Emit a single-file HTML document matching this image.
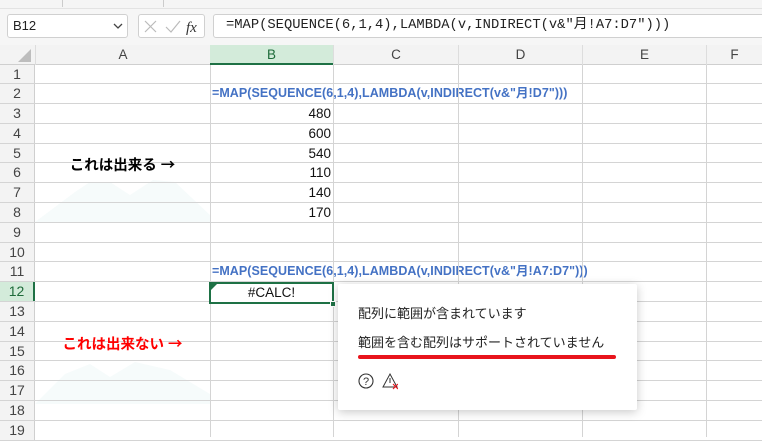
<!DOCTYPE html>
<html><head><meta charset="utf-8"><style>
*{margin:0;padding:0;box-sizing:border-box}
body{width:762px;height:437px;overflow:hidden;background:#fff;font-family:"Liberation Sans","Noto Sans CJK JP",sans-serif;position:relative}
.abs{position:absolute}
.grid{position:absolute;left:0;top:64.5px;width:762px}
.row{height:19.8px;position:relative;border-bottom:1px solid #d4d4d4}
.rh{position:absolute;left:0;top:0;width:35px;height:100%;background:#f3f3f3;color:#444;font-size:14px;text-align:center;line-height:19px;border-right:1px solid #cfcfcf}
.v{position:absolute;top:0;bottom:0;width:1px;background:#d4d4d4}
.num{position:absolute;right:431px;font-size:13.5px;color:#111;line-height:19px;top:0}
.f{position:absolute;left:212px;font-size:12.5px;font-weight:bold;color:#4472c4;line-height:19px;white-space:nowrap;letter-spacing:0.05px}
.ar{font-family:"Noto Sans CJK JP",sans-serif}
</style></head><body>
<div class="abs" style="left:0;top:0;width:762px;height:9px;background:#f5f5f5;border-bottom:1px solid #e3e3e3"></div>
<div class="abs" style="left:62px;top:0;width:1px;height:7px;background:#ccc"></div>
<div class="abs" style="left:163px;top:0;width:1px;height:7px;background:#ccc"></div>
<div class="abs" style="left:0;top:9px;width:762px;height:36px;background:#f6f6f6"></div>
<div class="abs" style="left:7px;top:14px;width:121px;height:24px;background:#fff;border:1px solid #d0d0d0;border-radius:3px;font-size:13px;line-height:22px;padding-left:5px;color:#222">B12</div>
<svg class="abs" style="left:113px;top:22px" width="10" height="8"><path d="M1 2 L5 6 L9 2" stroke="#444" stroke-width="1.3" fill="none"/></svg>
<div class="abs" style="left:138px;top:14px;width:67px;height:24px;background:#fff;border:1px solid #d0d0d0;border-radius:3px"></div>
<svg class="abs" style="left:142px;top:18px" width="60" height="18"><path d="M3 3 L14 14 M14 3 L3 14" stroke="#bbb" stroke-width="1.2"/><path d="M24 9 L29 14 L38 3" stroke="#bbb" stroke-width="1.2" fill="none"/><text x="44" y="14" font-family="Liberation Serif" font-style="italic" font-size="15" fill="#333">fx</text></svg>
<div class="abs" style="left:213px;top:14px;width:560px;height:24px;background:#fff;border:1px solid #d0d0d0;border-radius:3px;font-family:'Liberation Mono','Noto Sans CJK JP',monospace;font-size:13.8px;line-height:21px;padding-left:12px;color:#222;white-space:nowrap">=MAP(SEQUENCE(6,1,4),LAMBDA(v,INDIRECT(v&amp;"月!A7:D7")))</div>
<div class="abs" style="left:0;top:45px;width:762px;height:20px;background:#f3f3f3;border-bottom:1px solid #cfcfcf;font-size:13.5px;color:#444;line-height:20px">
<svg class="abs" style="left:18px;top:4px" width="14" height="14"><path d="M13 0 L13 13 L0 13Z" fill="#bdbdbd"/></svg>
<div class="abs" style="left:35px;width:175px;text-align:center;border-left:1px solid #ddd">A</div>
<div class="abs" style="left:210px;width:123px;height:20px;text-align:center;background:#d3ebda;color:#1e6b3a;border-bottom:2px solid #1e7145">B</div>
<div class="abs" style="left:333px;width:125px;text-align:center;border-left:1px solid #ddd">C</div>
<div class="abs" style="left:458px;width:124px;text-align:center;border-left:1px solid #ddd">D</div>
<div class="abs" style="left:582px;width:124px;text-align:center;border-left:1px solid #ddd">E</div>
<div class="abs" style="left:706px;width:56px;text-align:center;border-left:1px solid #ddd">F</div>
</div>
<svg class="abs" style="left:35px;top:170px" width="175" height="52"><path d="M0 52 L40 22 L55 12 L75 12 L95 25 L118 10 L140 12 L175 45 L175 52Z" fill="#f6fbfb"/></svg>
<svg class="abs" style="left:35px;top:352px" width="175" height="52"><path d="M0 52 L30 22 L55 12 L75 25 L100 10 L135 18 L175 42 L175 52Z" fill="#f6fbfb"/></svg>
<div class="grid">
<div class="row"><div class="rh">1</div></div>
<div class="row"><div class="rh">2</div><div class="f">=MAP(SEQUENCE(6,1,4),LAMBDA(v,INDIRECT(v&amp;"月!D7")))</div></div>
<div class="row"><div class="rh">3</div><div class="num">480</div></div>
<div class="row"><div class="rh">4</div><div class="num">600</div></div>
<div class="row"><div class="rh">5</div><div class="num">540</div></div>
<div class="row"><div class="rh">6</div><div class="num">110</div></div>
<div class="row"><div class="rh">7</div><div class="num">140</div></div>
<div class="row"><div class="rh">8</div><div class="num">170</div></div>
<div class="row"><div class="rh">9</div></div>
<div class="row"><div class="rh">10</div></div>
<div class="row"><div class="rh">11</div><div class="f">=MAP(SEQUENCE(6,1,4),LAMBDA(v,INDIRECT(v&amp;"月!A7:D7")))</div></div>
<div class="row"><div class="rh" style="background:#d3ebda;color:#1e6b3a;border-right:2px solid #1e7145">12</div></div>
<div class="row"><div class="rh">13</div></div>
<div class="row"><div class="rh">14</div></div>
<div class="row"><div class="rh">15</div></div>
<div class="row"><div class="rh">16</div></div>
<div class="row"><div class="rh">17</div></div>
<div class="row"><div class="rh">18</div></div>
<div class="row"><div class="rh">19</div></div>
</div>
<div class="v" style="left:210px;top:65px"></div>
<div class="v" style="left:333px;top:65px"></div>
<div class="v" style="left:458px;top:65px"></div>
<div class="v" style="left:582px;top:65px"></div>
<div class="v" style="left:706px;top:65px"></div>
<div class="abs" style="left:35px;top:154px;width:175px;text-align:center;font-size:14.5px;font-weight:bold;color:#000">これは出来る <span class="ar">→</span></div>
<div class="abs" style="left:35px;top:333px;width:175px;text-align:center;font-size:14.5px;font-weight:bold;color:#f00">これは出来ない <span class="ar">→</span></div>
<div class="abs" style="left:209px;top:282px;width:125px;height:22px;border:2px solid #1e7145;background:#fff;text-align:center;font-size:13.5px;line-height:18px;color:#111">#CALC!</div>
<svg class="abs" style="left:211px;top:284px" width="6" height="6"><path d="M0 0 L6 0 L0 6Z" fill="#1e7145"/></svg>
<div class="abs" style="left:330px;top:301px;width:6px;height:6px;background:#1e7145;border:1px solid #fff"></div>
<div class="abs" style="left:338px;top:284px;width:299px;height:126px;background:#fff;box-shadow:0 2px 10px rgba(0,0,0,.22);border-radius:2px">
<div class="abs" style="left:20px;top:19px;font-size:13px;color:#222">配列に範囲が含まれています</div>
<div class="abs" style="left:20px;top:48px;font-size:13px;color:#222">範囲を含む配列はサポートされていません</div>
<div class="abs" style="left:20px;top:71px;width:258px;height:4px;background:#e8141c;border-radius:2px"></div>
<svg class="abs" style="left:20px;top:88px" width="40" height="20"><circle cx="8" cy="9" r="7" stroke="#333" stroke-width="1.1" fill="none"/><text x="8" y="13" font-size="11" text-anchor="middle" fill="#333" font-family="Liberation Sans">?</text><path d="M32 2 L39 15 L25 15Z" stroke="#333" stroke-width="1" fill="none"/><path d="M32 6 L32 11" stroke="#333"/><path d="M35 12 L40 17 M40 12 L35 17" stroke="#e8141c" stroke-width="1.1"/></svg>
</div>
</body></html>
